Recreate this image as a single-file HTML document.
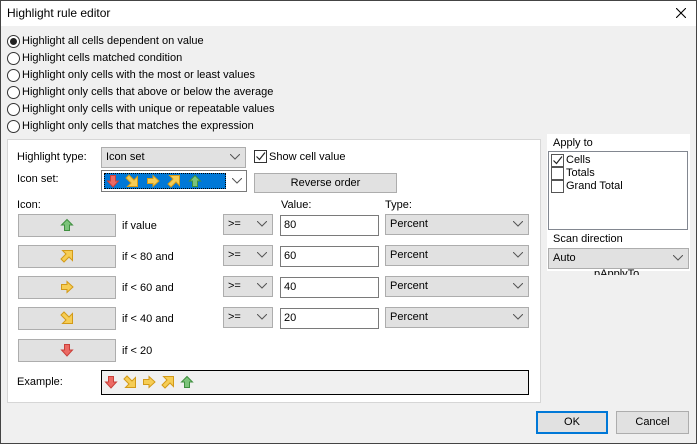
<!DOCTYPE html>
<html><head><meta charset="utf-8"><style>
*{box-sizing:border-box;margin:0;padding:0}
body{width:697px;height:444px;overflow:hidden;background:#f0f0f0;font-family:"Liberation Sans",sans-serif;font-size:11px;color:#000;position:relative}
.a{position:absolute;white-space:nowrap}
.frame{position:absolute;left:0;top:0;width:697px;height:444px;border:1px solid #444;pointer-events:none}
.title{position:absolute;left:0;top:0;width:697px;height:26px;background:#fff}
.radio{position:absolute;width:13px;height:13px;border:1px solid #333;border-radius:50%;background:#fff}
.combo{position:absolute;background:#e1e1e1;border:1px solid #adadad;height:21px;padding-left:4px;line-height:19px}
.combo .ch{position:absolute;right:5px;top:6px;width:10px;height:6px}
.input{position:absolute;background:#fff;border:1px solid #7a7a7a;height:21px;padding-left:3px;line-height:19px}
.btn{position:absolute;background:#e1e1e1;border:1px solid #adadad;text-align:center}
.chk{position:absolute;width:13px;height:13px;border:1px solid #333;background:#fff}
</style></head><body>
<div class="title"></div>
<div class="a" style="left:7px;top:6px;font-size:12px">Highlight rule editor</div>
<svg class="a" style="left:676px;top:8px" width="10" height="10"><path d="M0 0L10 10M10 0L0 10" stroke="#000" stroke-width="1.1"/></svg>

<div class="radio" style="left:7px;top:35px"><div style="position:absolute;left:2px;top:2px;width:7px;height:7px;border-radius:50%;background:#222"></div></div>
<div class="a" style="left:22px;top:35px">Highlight all cells dependent on value</div>
<div class="radio" style="left:7px;top:52px"></div><div class="a" style="left:22px;top:52px">Highlight cells matched condition</div>
<div class="radio" style="left:7px;top:69px"></div><div class="a" style="left:22px;top:69px">Highlight only cells with the most or least values</div>
<div class="radio" style="left:7px;top:86px"></div><div class="a" style="left:22px;top:86px">Highlight only cells that above or below the average</div>
<div class="radio" style="left:7px;top:103px"></div><div class="a" style="left:22px;top:103px">Highlight only cells with unique or repeatable values</div>
<div class="radio" style="left:7px;top:120px"></div><div class="a" style="left:22px;top:120px">Highlight only cells that matches the expression</div>

<div class="a" style="left:7px;top:139px;width:534px;height:264px;background:#fff;border:1px solid #d6d6d6"></div>

<svg width="0" height="0" style="position:absolute"><defs>
<g id="dn"><path d="M4.5 1.5h5v5.5h3l-5.5 6-5.5-6h3z" fill="#ec6a64" stroke="#c9403a"/></g>
<g id="up"><path d="M4.5 12.5h5V7h3L7 1.5 1.5 7h3z" fill="#7cc47a" stroke="#3f8f3f"/></g>
<g id="rt"><path d="M1.5 4.5h5.5v-3l6 5.5-6 5.5v-3H1.5z" fill="#f6cd55" stroke="#d39a18"/></g>
<g id="dr"><path d="M1 4L4 1L9 6L12.5 2.5V12.5H2.5L6 9Z" fill="#f6cd55" stroke="#d39a18"/></g>
<g id="ur"><path d="M1 10L4 13L9 8L12.5 11.5V1.5H2.5L6 5Z" fill="#f6cd55" stroke="#d39a18"/></g>
</defs></svg>

<div class="a" style="left:17px;top:151px">Highlight type:</div>
<div class="combo" style="left:101px;top:147px;width:145px">Icon set<svg class="ch" viewBox="0 0 10 6"><path d="M0 0l5 5 5-5" fill="none" stroke="#555"/></svg></div>
<div class="chk" style="left:254px;top:150px"><svg width="11" height="11" style="position:absolute;left:0;top:0"><path d="M1.5 5.5l3 3 5.5-7" fill="none" stroke="#222" stroke-width="1.2"/></svg></div>
<div class="a" style="left:269px;top:151px">Show cell value</div>

<div class="a" style="left:17px;top:173px">Icon set:</div>
<div class="a" style="left:101px;top:170px;width:146px;height:22px;background:#fff;border:1px solid #7a7a7a"></div>
<div class="a" style="left:104px;top:173px;width:122px;height:16px;background:#0078d7;border:1px dotted #000"></div>
<svg class="a" style="left:106px;top:174px" width="120" height="14"><use href="#dn" x="0"/><use href="#dr" x="19"/><use href="#rt" x="40"/><use href="#ur" x="61"/><use href="#up" x="82"/></svg>
<svg class="a" style="left:232px;top:178px" width="10" height="6" viewBox="0 0 10 6"><path d="M0 0l5 5 5-5" fill="none" stroke="#555"/></svg>
<div class="btn" style="left:254px;top:173px;width:143px;height:20px;line-height:18px">Reverse order</div>

<div class="a" style="left:17px;top:199px">Icon:</div>
<div class="a" style="left:281px;top:199px">Value:</div>
<div class="a" style="left:385px;top:199px">Type:</div>

<div class="btn" style="left:18px;top:214px;width:98px;height:23px"></div>
<svg class="a" style="left:60px;top:218px" width="14" height="14"><use href="#up"/></svg>
<div class="a" style="left:122px;top:220px">if value</div>
<div class="combo" style="left:223px;top:214px;width:50px">&gt;=<svg class="ch" viewBox="0 0 10 6"><path d="M0 0l5 5 5-5" fill="none" stroke="#555"/></svg></div>
<div class="input" style="left:280px;top:215px;width:99px">80</div>
<div class="combo" style="left:385px;top:214px;width:144px">Percent<svg class="ch" viewBox="0 0 10 6"><path d="M0 0l5 5 5-5" fill="none" stroke="#555"/></svg></div>

<div class="btn" style="left:18px;top:245px;width:98px;height:23px"></div>
<svg class="a" style="left:60px;top:249px" width="14" height="14"><use href="#ur"/></svg>
<div class="a" style="left:122px;top:251px">if &lt; 80 and</div>
<div class="combo" style="left:223px;top:245px;width:50px">&gt;=<svg class="ch" viewBox="0 0 10 6"><path d="M0 0l5 5 5-5" fill="none" stroke="#555"/></svg></div>
<div class="input" style="left:280px;top:246px;width:99px">60</div>
<div class="combo" style="left:385px;top:245px;width:144px">Percent<svg class="ch" viewBox="0 0 10 6"><path d="M0 0l5 5 5-5" fill="none" stroke="#555"/></svg></div>

<div class="btn" style="left:18px;top:276px;width:98px;height:23px"></div>
<svg class="a" style="left:60px;top:280px" width="14" height="14"><use href="#rt"/></svg>
<div class="a" style="left:122px;top:282px">if &lt; 60 and</div>
<div class="combo" style="left:223px;top:276px;width:50px">&gt;=<svg class="ch" viewBox="0 0 10 6"><path d="M0 0l5 5 5-5" fill="none" stroke="#555"/></svg></div>
<div class="input" style="left:280px;top:277px;width:99px">40</div>
<div class="combo" style="left:385px;top:276px;width:144px">Percent<svg class="ch" viewBox="0 0 10 6"><path d="M0 0l5 5 5-5" fill="none" stroke="#555"/></svg></div>

<div class="btn" style="left:18px;top:307px;width:98px;height:23px"></div>
<svg class="a" style="left:60px;top:311px" width="14" height="14"><use href="#dr"/></svg>
<div class="a" style="left:122px;top:313px">if &lt; 40 and</div>
<div class="combo" style="left:223px;top:307px;width:50px">&gt;=<svg class="ch" viewBox="0 0 10 6"><path d="M0 0l5 5 5-5" fill="none" stroke="#555"/></svg></div>
<div class="input" style="left:280px;top:308px;width:99px">20</div>
<div class="combo" style="left:385px;top:307px;width:144px">Percent<svg class="ch" viewBox="0 0 10 6"><path d="M0 0l5 5 5-5" fill="none" stroke="#555"/></svg></div>

<div class="btn" style="left:18px;top:339px;width:98px;height:23px"></div>
<svg class="a" style="left:60px;top:343px" width="14" height="14"><use href="#dn"/></svg>
<div class="a" style="left:122px;top:345px">if &lt; 20</div>

<div class="a" style="left:17px;top:376px">Example:</div>
<div class="a" style="left:101px;top:370px;width:428px;height:25px;background:#f0f0f0;border:1px solid #000"></div>
<svg class="a" style="left:104px;top:375px" width="100" height="14"><use href="#dn" x="0"/><use href="#dr" x="19"/><use href="#rt" x="38"/><use href="#ur" x="57"/><use href="#up" x="76"/></svg>

<div class="a" style="left:547px;top:134px;width:143px;height:137px;background:#fff"></div>
<div class="a" style="left:553px;top:137px">Apply to</div>
<div class="a" style="left:548px;top:151px;width:140px;height:79px;background:#fff;border:1px solid #828790"></div>
<div class="chk" style="left:551px;top:154px;border-color:#555"><svg width="11" height="11" style="position:absolute;left:0;top:0"><path d="M1.5 5.5l3 3 5.5-7" fill="none" stroke="#222" stroke-width="1.2"/></svg></div>
<div class="a" style="left:566px;top:154px">Cells</div>
<div class="chk" style="left:551px;top:167px;border-color:#555"></div><div class="a" style="left:566px;top:167px">Totals</div>
<div class="chk" style="left:551px;top:180px;border-color:#555"></div><div class="a" style="left:566px;top:180px">Grand Total</div>
<div class="a" style="left:553px;top:233px">Scan direction</div>
<div class="combo" style="left:548px;top:248px;width:141px;height:21px">Auto<svg class="ch" viewBox="0 0 10 6"><path d="M0 0l5 5 5-5" fill="none" stroke="#555"/></svg></div>
<div class="a" style="left:594px;top:269px;height:6px;overflow:hidden;line-height:10px">pApplyTo</div>

<div class="btn" style="left:536px;top:411px;width:72px;height:23px;line-height:19px;border:2px solid #0078d7">OK</div>
<div class="btn" style="left:616px;top:411px;width:73px;height:23px;line-height:21px">Cancel</div>
<div class="frame"></div>
</body></html>
